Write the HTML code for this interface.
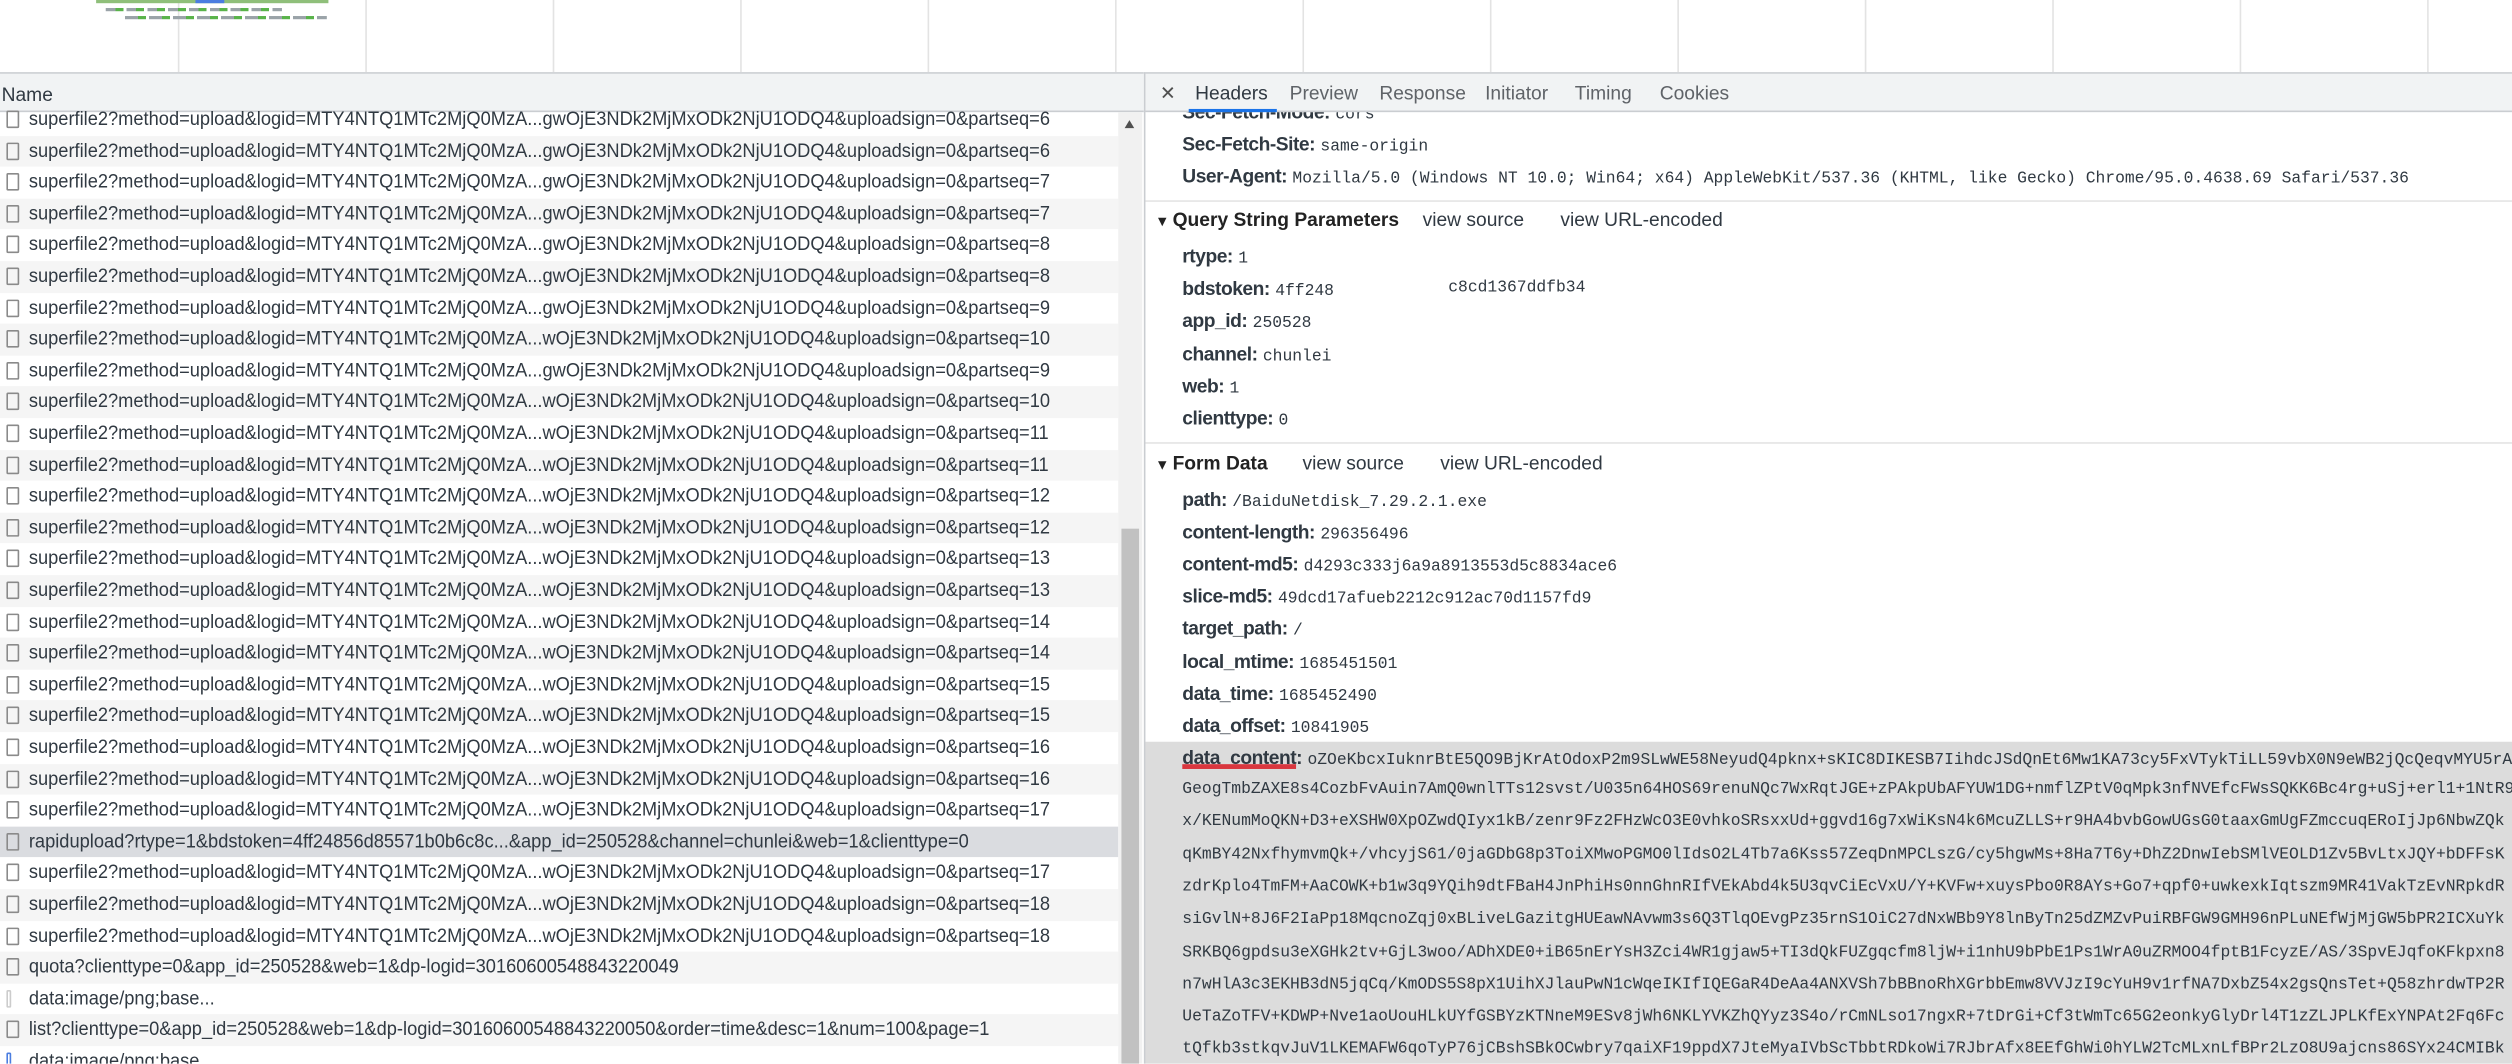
<!DOCTYPE html>
<html><head><meta charset="utf-8">
<style>
html,body{margin:0;padding:0;width:2512px;height:1064px;overflow:hidden;background:#fff;}
#w{position:absolute;left:0;top:0;width:1568px;height:664px;transform:scale(1.60204);transform-origin:0 0;font-family:"Liberation Sans","Noto Sans CJK SC",sans-serif;font-size:12px;color:#303942;overflow:hidden;}
.vl{position:absolute;top:0;width:1px;height:45px;background:#e3e3e3;}
.gb{position:absolute;height:2px;}
#left{position:absolute;left:0;top:45px;width:714px;height:619px;overflow:hidden;}
#nh{position:absolute;left:0;top:0;width:714px;height:25px;background:#f1f3f4;border-top:1px solid #cacdd1;border-bottom:1px solid #cacdd1;box-sizing:border-box;}
#nh span{position:absolute;left:1px;top:6px;color:#303942;}
.r{position:absolute;left:0;width:698px;height:19.6px;line-height:19.6px;white-space:nowrap;overflow:hidden;color:#303942;}
.r.o{background:#f5f5f5}
.r.s{background:#dadce0}
.r i{position:absolute;left:4px;top:4px;width:8px;height:11px;border:1px solid #8a8a8a;border-radius:1px;box-sizing:border-box;}
.r b{font-weight:normal;position:absolute;left:18px;transform:scaleX(0.95);transform-origin:0 50%;}
#sb{position:absolute;left:698px;top:25px;width:15px;height:594px;background:#f1f1f1;}
#th{position:absolute;left:700px;top:285px;width:11px;height:340px;background:#c1c1c1;}
#right{position:absolute;left:714px;top:45px;width:854px;height:619px;overflow:hidden;border-left:1px solid #cacdd1;box-sizing:border-box;}
#tabs{position:absolute;left:0;top:0;width:854px;height:25px;background:#f1f3f4;border-top:1px solid #cacdd1;border-bottom:1px solid #cacdd1;box-sizing:border-box;z-index:2;}
#tabs span{position:absolute;top:5px;color:#5f6368;}
.ln{position:absolute;left:23px;white-space:nowrap;height:20px;line-height:20px;}
.k{font-weight:bold;color:#303942;letter-spacing:-0.3px}
.v{font-family:"Liberation Mono",monospace;font-size:10.2px;color:#303942;}
.sec{position:absolute;left:6px;font-weight:bold;color:#222;}
.sec u{text-decoration:none;font-size:9px;margin-right:2px;}
.vs{position:absolute;color:#303942;}
.hr{position:absolute;left:0;width:854px;height:1px;background:#e4e4e4;}
#gray{position:absolute;left:0;top:418px;width:854px;height:210px;background:#dcdcdc;}
.dl{position:absolute;left:23px;white-space:nowrap;font-family:"Liberation Mono",monospace;font-size:10.2px;color:#303942;}
</style></head><body><div id="w">
<div class="vl" style="left:111px"></div><div class="vl" style="left:228px"></div><div class="vl" style="left:345px"></div><div class="vl" style="left:462px"></div><div class="vl" style="left:579px"></div><div class="vl" style="left:696px"></div><div class="vl" style="left:813px"></div><div class="vl" style="left:930px"></div><div class="vl" style="left:1047px"></div><div class="vl" style="left:1164px"></div><div class="vl" style="left:1281px"></div><div class="vl" style="left:1398px"></div><div class="vl" style="left:1515px"></div>
<div class="gb" style="left:60px;top:0;width:145px;background:#8fbf7a"></div>
<div class="gb" style="left:66px;top:5px;width:110px;background:repeating-linear-gradient(90deg,#9aa3a8 0 6px,#59b34a 6px 11px,#fff 11px 13px)"></div>
<div class="gb" style="left:78px;top:10px;width:126px;background:repeating-linear-gradient(90deg,#9aa3a8 0 8px,#59b34a 8px 13px,#fff 13px 15px)"></div>
<div class="gb" style="left:122px;top:0;width:18px;background:#4b7de0"></div>

<div id="left">
<div id="nh"><span>Name</span></div>
<div class="r" style="top:20px"><i></i><b>superfile2?method=upload&amp;logid=MTY4NTQ1MTc2MjQ0MzA...gwOjE3NDk2MjMxODk2NjU1ODQ4&amp;uploadsign=0&amp;partseq=6</b></div>
<div class="r o" style="top:39.6px"><i></i><b>superfile2?method=upload&amp;logid=MTY4NTQ1MTc2MjQ0MzA...gwOjE3NDk2MjMxODk2NjU1ODQ4&amp;uploadsign=0&amp;partseq=6</b></div>
<div class="r" style="top:59.2px"><i></i><b>superfile2?method=upload&amp;logid=MTY4NTQ1MTc2MjQ0MzA...gwOjE3NDk2MjMxODk2NjU1ODQ4&amp;uploadsign=0&amp;partseq=7</b></div>
<div class="r o" style="top:78.8px"><i></i><b>superfile2?method=upload&amp;logid=MTY4NTQ1MTc2MjQ0MzA...gwOjE3NDk2MjMxODk2NjU1ODQ4&amp;uploadsign=0&amp;partseq=7</b></div>
<div class="r" style="top:98.4px"><i></i><b>superfile2?method=upload&amp;logid=MTY4NTQ1MTc2MjQ0MzA...gwOjE3NDk2MjMxODk2NjU1ODQ4&amp;uploadsign=0&amp;partseq=8</b></div>
<div class="r o" style="top:118px"><i></i><b>superfile2?method=upload&amp;logid=MTY4NTQ1MTc2MjQ0MzA...gwOjE3NDk2MjMxODk2NjU1ODQ4&amp;uploadsign=0&amp;partseq=8</b></div>
<div class="r" style="top:137.6px"><i></i><b>superfile2?method=upload&amp;logid=MTY4NTQ1MTc2MjQ0MzA...gwOjE3NDk2MjMxODk2NjU1ODQ4&amp;uploadsign=0&amp;partseq=9</b></div>
<div class="r o" style="top:157.2px"><i></i><b>superfile2?method=upload&amp;logid=MTY4NTQ1MTc2MjQ0MzA...wOjE3NDk2MjMxODk2NjU1ODQ4&amp;uploadsign=0&amp;partseq=10</b></div>
<div class="r" style="top:176.8px"><i></i><b>superfile2?method=upload&amp;logid=MTY4NTQ1MTc2MjQ0MzA...gwOjE3NDk2MjMxODk2NjU1ODQ4&amp;uploadsign=0&amp;partseq=9</b></div>
<div class="r o" style="top:196.4px"><i></i><b>superfile2?method=upload&amp;logid=MTY4NTQ1MTc2MjQ0MzA...wOjE3NDk2MjMxODk2NjU1ODQ4&amp;uploadsign=0&amp;partseq=10</b></div>
<div class="r" style="top:216px"><i></i><b>superfile2?method=upload&amp;logid=MTY4NTQ1MTc2MjQ0MzA...wOjE3NDk2MjMxODk2NjU1ODQ4&amp;uploadsign=0&amp;partseq=11</b></div>
<div class="r o" style="top:235.6px"><i></i><b>superfile2?method=upload&amp;logid=MTY4NTQ1MTc2MjQ0MzA...wOjE3NDk2MjMxODk2NjU1ODQ4&amp;uploadsign=0&amp;partseq=11</b></div>
<div class="r" style="top:255.2px"><i></i><b>superfile2?method=upload&amp;logid=MTY4NTQ1MTc2MjQ0MzA...wOjE3NDk2MjMxODk2NjU1ODQ4&amp;uploadsign=0&amp;partseq=12</b></div>
<div class="r o" style="top:274.8px"><i></i><b>superfile2?method=upload&amp;logid=MTY4NTQ1MTc2MjQ0MzA...wOjE3NDk2MjMxODk2NjU1ODQ4&amp;uploadsign=0&amp;partseq=12</b></div>
<div class="r" style="top:294.4px"><i></i><b>superfile2?method=upload&amp;logid=MTY4NTQ1MTc2MjQ0MzA...wOjE3NDk2MjMxODk2NjU1ODQ4&amp;uploadsign=0&amp;partseq=13</b></div>
<div class="r o" style="top:314px"><i></i><b>superfile2?method=upload&amp;logid=MTY4NTQ1MTc2MjQ0MzA...wOjE3NDk2MjMxODk2NjU1ODQ4&amp;uploadsign=0&amp;partseq=13</b></div>
<div class="r" style="top:333.6px"><i></i><b>superfile2?method=upload&amp;logid=MTY4NTQ1MTc2MjQ0MzA...wOjE3NDk2MjMxODk2NjU1ODQ4&amp;uploadsign=0&amp;partseq=14</b></div>
<div class="r o" style="top:353.2px"><i></i><b>superfile2?method=upload&amp;logid=MTY4NTQ1MTc2MjQ0MzA...wOjE3NDk2MjMxODk2NjU1ODQ4&amp;uploadsign=0&amp;partseq=14</b></div>
<div class="r" style="top:372.8px"><i></i><b>superfile2?method=upload&amp;logid=MTY4NTQ1MTc2MjQ0MzA...wOjE3NDk2MjMxODk2NjU1ODQ4&amp;uploadsign=0&amp;partseq=15</b></div>
<div class="r o" style="top:392.4px"><i></i><b>superfile2?method=upload&amp;logid=MTY4NTQ1MTc2MjQ0MzA...wOjE3NDk2MjMxODk2NjU1ODQ4&amp;uploadsign=0&amp;partseq=15</b></div>
<div class="r" style="top:412px"><i></i><b>superfile2?method=upload&amp;logid=MTY4NTQ1MTc2MjQ0MzA...wOjE3NDk2MjMxODk2NjU1ODQ4&amp;uploadsign=0&amp;partseq=16</b></div>
<div class="r o" style="top:431.6px"><i></i><b>superfile2?method=upload&amp;logid=MTY4NTQ1MTc2MjQ0MzA...wOjE3NDk2MjMxODk2NjU1ODQ4&amp;uploadsign=0&amp;partseq=16</b></div>
<div class="r" style="top:451.2px"><i></i><b>superfile2?method=upload&amp;logid=MTY4NTQ1MTc2MjQ0MzA...wOjE3NDk2MjMxODk2NjU1ODQ4&amp;uploadsign=0&amp;partseq=17</b></div>
<div class="r s" style="top:470.8px"><i></i><b>rapidupload?rtype=1&amp;bdstoken=4ff24856d85571b0b6c8c...&amp;app_id=250528&amp;channel=chunlei&amp;web=1&amp;clienttype=0</b></div>
<div class="r" style="top:490.4px"><i></i><b>superfile2?method=upload&amp;logid=MTY4NTQ1MTc2MjQ0MzA...wOjE3NDk2MjMxODk2NjU1ODQ4&amp;uploadsign=0&amp;partseq=17</b></div>
<div class="r o" style="top:510px"><i></i><b>superfile2?method=upload&amp;logid=MTY4NTQ1MTc2MjQ0MzA...wOjE3NDk2MjMxODk2NjU1ODQ4&amp;uploadsign=0&amp;partseq=18</b></div>
<div class="r" style="top:529.6px"><i></i><b>superfile2?method=upload&amp;logid=MTY4NTQ1MTc2MjQ0MzA...wOjE3NDk2MjMxODk2NjU1ODQ4&amp;uploadsign=0&amp;partseq=18</b></div>
<div class="r o" style="top:549.2px"><i></i><b>quota?clienttype=0&amp;app_id=250528&amp;web=1&amp;dp-logid=30160600548843220049</b></div>
<div class="r" style="top:568.8px"><i style="width:3px;border-color:#ccc"></i><b>data:image/png;base...</b></div>
<div class="r o" style="top:588.4px"><i></i><b>list?clienttype=0&amp;app_id=250528&amp;web=1&amp;dp-logid=30160600548843220050&amp;order=time&amp;desc=1&amp;num=100&amp;page=1</b></div>
<div class="r" style="top:608px"><i style="width:3px;border-color:#4b7de0"></i><b>data:image/png;base...</b></div>
<div id="sb"></div><div id="th"></div>
<div style="position:absolute;left:702px;top:30px;width:0;height:0;border-left:3.5px solid transparent;border-right:3.5px solid transparent;border-bottom:5px solid #505050"></div>
</div>

<div id="right">
<div id="tabs">
<span style="left:9px;color:#505050">✕</span>
<span style="left:31px;color:#303942">Headers</span>
<span style="left:90px">Preview</span>
<span style="left:146px">Response</span>
<span style="left:212px">Initiator</span>
<span style="left:268px">Timing</span>
<span style="left:321px">Cookies</span>
<div style="position:absolute;left:27px;top:22px;width:55px;height:2px;background:#1a73e8"></div>
</div>
<div class="ln" style="top:15px"><span class="k">Sec-Fetch-Mode:</span> <span class="v">cors</span></div>
<div class="ln" style="top:35px"><span class="k">Sec-Fetch-Site:</span> <span class="v">same-origin</span></div>
<div class="ln" style="top:55px"><span class="k">User-Agent:</span> <span class="v">Mozilla/5.0 (Windows NT 10.0; Win64; x64) AppleWebKit/537.36 (KHTML, like Gecko) Chrome/95.0.4638.69 Safari/537.36</span></div>
<div class="hr" style="top:80px"></div>
<div class="sec" style="top:85px"><u>▼</u>Query String Parameters</div>
<div class="vs" style="left:173px;top:85px">view source</div>
<div class="vs" style="left:259px;top:85px">view URL-encoded</div>
<div class="ln" style="top:105px"><span class="k">rtype:</span> <span class="v">1</span></div>
<div class="ln" style="top:125px"><span class="k">bdstoken:</span> <span class="v">4ff248</span></div>
<div class="v" style="position:absolute;left:189px;top:130px">c8cd1367ddfb34</div>
<div class="ln" style="top:145px"><span class="k">app_id:</span> <span class="v">250528</span></div>
<div class="ln" style="top:166px"><span class="k">channel:</span> <span class="v">chunlei</span></div>
<div class="ln" style="top:186px"><span class="k">web:</span> <span class="v">1</span></div>
<div class="ln" style="top:206px"><span class="k">clienttype:</span> <span class="v">0</span></div>
<div class="hr" style="top:231px"></div>
<div class="sec" style="top:237px"><u>▼</u>Form Data</div>
<div class="vs" style="left:98px;top:237px">view source</div>
<div class="vs" style="left:184px;top:237px">view URL-encoded</div>
<div class="ln" style="top:257px"><span class="k">path:</span> <span class="v">/BaiduNetdisk_7.29.2.1.exe</span></div>
<div class="ln" style="top:277px"><span class="k">content-length:</span> <span class="v">296356496</span></div>
<div class="ln" style="top:297px"><span class="k">content-md5:</span> <span class="v">d4293c333j6a9a8913553d5c8834ace6</span></div>
<div class="ln" style="top:317px"><span class="k">slice-md5:</span> <span class="v">49dcd17afueb2212c912ac70d1157fd9</span></div>
<div class="ln" style="top:337px"><span class="k">target_path:</span> <span class="v">/</span></div>
<div class="ln" style="top:358px"><span class="k">local_mtime:</span> <span class="v">1685451501</span></div>
<div class="ln" style="top:378px"><span class="k">data_time:</span> <span class="v">1685452490</span></div>
<div class="ln" style="top:398px"><span class="k">data_offset:</span> <span class="v">10841905</span></div>
<div id="gray"></div>
<div class="ln" style="top:418px"><span class="k">data_content:</span> <span class="v">oZOeKbcxIuknrBtE5QO9BjKrAtOdoxP2m9SLwWE58NeyudQ4pknx+sKIC8DIKESB7IihdcJSdQnEt6Mw1KA73cy5FxVTykTiLL59vbX0N9eWB2jQcQeqvMYU5rA2xPq</span></div>
<div style="position:absolute;left:23px;top:432px;width:71px;height:3px;background:#d9363e"></div>
<div class="dl" style="top:443px">GeogTmbZAXE8s4CozbFvAuin7AmQ0wnlTTs12svst/U035n64HOS69renuNQc7WxRqtJGE+zPAkpUbAFYUW1DG+nmflZPtV0qMpk3nfNVEfcFWsSQKK6Bc4rg+uSj+erl1+1NtR9</div>
<div class="dl" style="top:463px">x/KENumMoQKN+D3+eXSHW0XpOZwdQIyx1kB/zenr9Fz2FHzWcO3E0vhkoSRsxxUd+ggvd16g7xWiKsN4k6McuZLLS+r9HA4bvbGowUGsG0taaxGmUgFZmccuqERoIjJp6NbwZQk</div>
<div class="dl" style="top:484px">qKmBY42NxfhymvmQk+/vhcyjS61/0jaGDbG8p3ToiXMwoPGMO0lIdsO2L4Tb7a6Kss57ZeqDnMPCLszG/cy5hgwMs+8Ha7T6y+DhZ2DnwIebSMlVEOLD1Zv5BvLtxJQY+bDFFsK</div>
<div class="dl" style="top:504px">zdrKplo4TmFM+AaCOWK+b1w3q9YQih9dtFBaH4JnPhiHs0nnGhnRIfVEkAbd4k5U3qvCiEcVxU/Y+KVFw+xuysPbo0R8AYs+Go7+qpf0+uwkexkIqtszm9MR41VakTzEvNRpkdR</div>
<div class="dl" style="top:524px">siGvlN+8J6F2IaPp18MqcnoZqj0xBLiveLGazitgHUEawNAvwm3s6Q3TlqOEvgPz35rnS1OiC27dNxWBb9Y8lnByTn25dZMZvPuiRBFGW9GMH96nPLuNEfWjMjGW5bPR2ICXuYk</div>
<div class="dl" style="top:545px">SRKBQ6gpdsu3eXGHk2tv+GjL3woo/ADhXDE0+iB65nErYsH3Zci4WR1gjaw5+TI3dQkFUZgqcfm8ljW+i1nhU9bPbE1Ps1WrA0uZRMOO4fptB1FcyzE/AS/3SpvEJqfoKFkpxn8</div>
<div class="dl" style="top:565px">n7wHlA3c3EKHB3dN5jqCq/KmODS5S8pX1UihXJlauPwN1cWqeIKIfIQEGaR4DeAa4ANXVSh7bBBnoRhXGrbbEmw8VVJzI9cYuH9v1rfNA7DxbZ54x2gsQnsTet+Q58zhrdwTP2R</div>
<div class="dl" style="top:585px">UeTaZoTFV+KDWP+Nve1aoUouHLkUYfGSBYzKTNneM9ESv8jWh6NKLYVKZhQYyz3S4o/rCmNLso17ngxR+7tDrGi+Cf3tWmTc65G2eonkyGlyDrl4T1zZLJPLKfExYNPAt2Fq6Fc</div>
<div class="dl" style="top:605px">tQfkb3stkqvJuV1LKEMAFW6qoTyP76jCBshSBkOCwbry7qaiXF19ppdX7JteMyaIVbScTbbtRDkoWi7RJbrAfx8EEfGhWi0hYLW2TcMLxnLfBPr2LzO8U9ajcns86SYx24CMIBk</div>
</div>
</div></body></html>
